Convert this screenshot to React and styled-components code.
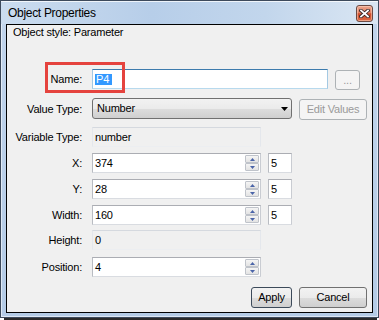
import React from "react";
import styled, { createGlobalStyle } from "styled-components";

const GlobalStyle = createGlobalStyle`
  html, body { margin: 0; padding: 0; background: #ffffff; }
  body { font-family: "Liberation Sans", Arial, sans-serif; }
  * { box-sizing: border-box; }
`;

const Window = styled.div`
  width: 379px;
  height: 318px;
  border: 1px solid #3d4a5c;
  background: linear-gradient(to bottom, #c2d5ec, #b4cbe6);
  box-shadow: inset 0 0 0 1px rgba(255, 255, 255, 0.55);
  display: flex;
  flex-direction: column;
`;

const BehindEdge = styled.div`
  margin-left: 4px;
  width: 373px;
  height: 2px;
  background: #2a2a2a;
`;

const TitleBar = styled.div`
  height: 23px;
  display: flex;
  align-items: flex-start;
  justify-content: space-between;
  padding: 0 5px 0 7px;
  background: linear-gradient(90deg, #cbdcef 0%, #b7cee9 40%, #c2d6ec 70%, #dae6f3 100%);
  box-shadow: inset 0 1px 0 rgba(255, 255, 255, 0.75);
`;

const Title = styled.div`
  font-size: 12px;
  letter-spacing: -0.3px;
  line-height: 14px;
  margin-top: 5px;
  color: #000;
`;

const CloseButton = styled.div`
  width: 17px;
  height: 17px;
  margin-top: 4px;
  border: 1px solid #6b4a44;
  border-radius: 3px;
  background: linear-gradient(to bottom, #eba58f 0%, #e08164 45%, #cf4a2a 52%, #dc6a44 100%);
  box-shadow: inset 0 0 0 1px rgba(255, 220, 200, 0.5);
  display: flex;
  align-items: center;
  justify-content: center;
`;

const Client = styled.div`
  position: relative;
  flex: 1;
  margin: 0 5px 4px;
  border: 1px solid #000;
  background: #f0f0f0;
  display: flex;
  flex-direction: column;
  padding: 0 5px 0 0;
  font-size: 11px;
  letter-spacing: -0.2px;
  color: #000;
`;

const Header = styled.div`
  margin: 1px 0 0 6px;
  line-height: 13px;
`;

const Row = styled.div`
  display: flex;
  align-items: flex-start;
  gap: 7px;
  margin-top: ${(p) => p.$mt}px;
  justify-content: ${(p) => (p.$end ? "flex-end" : "flex-start")};
`;

const Label = styled.div`
  width: 78px;
  padding-right: 3px;
  align-self: stretch;
  display: flex;
  align-items: center;
  justify-content: flex-end;
  line-height: 13px;
  white-space: nowrap;
`;

const TextBox = styled.div`
  width: ${(p) => p.$w}px;
  height: 20px;
  border: 1px solid;
  border-color: ${(p) =>
    p.$focus
      ? "#3d7bad #a4c9e3 #b7d9ed #a4c9e3"
      : p.$readonly
      ? "#d5d9df #e4e7ec #eceef1 #e4e7ec"
      : "#abadb3 #c9ccd2 #d9dce1 #b9bcc2"};
  background: ${(p) => (p.$readonly ? "#f0f0f0" : "#ffffff")};
  display: flex;
  align-items: center;
  padding: 0 1px 0 2px;
  line-height: 13px;
  white-space: nowrap;
`;

const Value = styled.span`
  flex: 1;
`;

const Selected = styled.span`
  background: #3399ff;
  color: #fff;
  padding: 0 3px 0 1px;
  line-height: 11px;
  height: 11px;
  display: inline-block;
`;

const Spin = styled.div`
  width: 14px;
  height: 16px;
  display: flex;
  flex-direction: column;
`;

const SpinButton = styled.div`
  height: 8px;
  border: 1px solid #bfc3ca;
  border-radius: 1px;
  background: linear-gradient(to bottom, #f5f5f5, #e3e3e3);
  display: flex;
  align-items: center;
  justify-content: center;
`;

const Combo = styled.div`
  width: 200px;
  height: 21px;
  border: 1px solid #707070;
  border-radius: 3px;
  background: linear-gradient(to bottom, #f2f2f2 0%, #ebebeb 50%, #dddddd 51%, #cfcfcf 100%);
  display: flex;
  align-items: center;
  padding: 0 3px 0 4px;
  line-height: 13px;
`;

const Button = styled.div`
  width: ${(p) => p.$w}px;
  height: ${(p) => p.$h || 21}px;
  margin-top: ${(p) => p.$mt || 0}px;
  border: 1px solid ${(p) => (p.$disabled ? "#adb2b5" : p.$default ? "#3c4a5a" : "#707070")};
  border-radius: 3px;
  background: ${(p) =>
    p.$disabled
      ? "#f4f4f4"
      : "linear-gradient(to bottom, #f2f2f2 0%, #ebebeb 50%, #dddddd 51%, #cfcfcf 100%)"};
  color: ${(p) => (p.$disabled ? "#9a9a9a" : "#000")};
  display: flex;
  align-items: center;
  justify-content: center;
  line-height: 13px;
  white-space: nowrap;
`;

const Highlight = styled.div`
  position: absolute;
  left: 38px;
  top: 37px;
  width: 80px;
  height: 31px;
  border: 3px solid #e5433e;
  pointer-events: none;
`;

const UpArrow = () => (
  <svg width="5" height="3" viewBox="0 0 5 3">
    <polygon points="2.5,0 5,3 0,3" fill="#4a64a8" />
  </svg>
);
const DownArrow = () => (
  <svg width="5" height="3" viewBox="0 0 5 3">
    <polygon points="0,0 5,0 2.5,3" fill="#4a64a8" />
  </svg>
);

const Numeric = ({ value, w = 169 }) => (
  <TextBox $w={w}>
    <Value>{value}</Value>
    <Spin>
      <SpinButton>
        <UpArrow />
      </SpinButton>
      <SpinButton>
        <DownArrow />
      </SpinButton>
    </Spin>
  </TextBox>
);

export default function App() {
  return (
    <>
      <GlobalStyle />
      <Window>
        <TitleBar>
          <Title>Object Properties</Title>
          <CloseButton>
            <svg width="11" height="9" viewBox="0 0 11 9">
              <path d="M2 1.5 L9 7.5 M9 1.5 L2 7.5" stroke="#3a2a2a" strokeWidth="3.6" strokeLinecap="square" />
              <path d="M2 1.5 L9 7.5 M9 1.5 L2 7.5" stroke="#ffffff" strokeWidth="1.7" strokeLinecap="square" />
            </svg>
          </CloseButton>
        </TitleBar>
        <Client>
          <Header>Object style: Parameter</Header>

          <Row $mt={30}>
            <Label>Name:</Label>
            <TextBox $w={236} $focus>
              <Selected>P4</Selected>
            </TextBox>
            <Button $w={25} $h={20} $mt={1} $disabled>...</Button>
          </Row>

          <Row $mt={8}>
            <Label>Value Type:</Label>
            <Combo>
              <Value>Number</Value>
              <svg width="7" height="4" viewBox="0 0 7 4">
                <polygon points="0,0 7,0 3.5,4" fill="#000" />
              </svg>
            </Combo>
            <Button $w={68} $mt={1} $disabled>Edit Values</Button>
          </Row>

          <Row $mt={7}>
            <Label>Variable Type:</Label>
            <TextBox $w={169} $readonly>number</TextBox>
          </Row>

          <Row $mt={6}>
            <Label>X:</Label>
            <Numeric value="374" />
            <TextBox $w={24}>5</TextBox>
          </Row>

          <Row $mt={6}>
            <Label>Y:</Label>
            <Numeric value="28" />
            <TextBox $w={24}>5</TextBox>
          </Row>

          <Row $mt={6}>
            <Label>Width:</Label>
            <Numeric value="160" />
            <TextBox $w={24}>5</TextBox>
          </Row>

          <Row $mt={5}>
            <Label>Height:</Label>
            <TextBox $w={169} $readonly>0</TextBox>
          </Row>

          <Row $mt={7}>
            <Label>Position:</Label>
            <Numeric value="4" />
          </Row>

          <Row $mt={10} $end>
            <Button $w={41} $default>Apply</Button>
            <Button $w={68}>Cancel</Button>
          </Row>

          <Highlight />
        </Client>
      </Window>
      <BehindEdge />
    </>
  );
}
